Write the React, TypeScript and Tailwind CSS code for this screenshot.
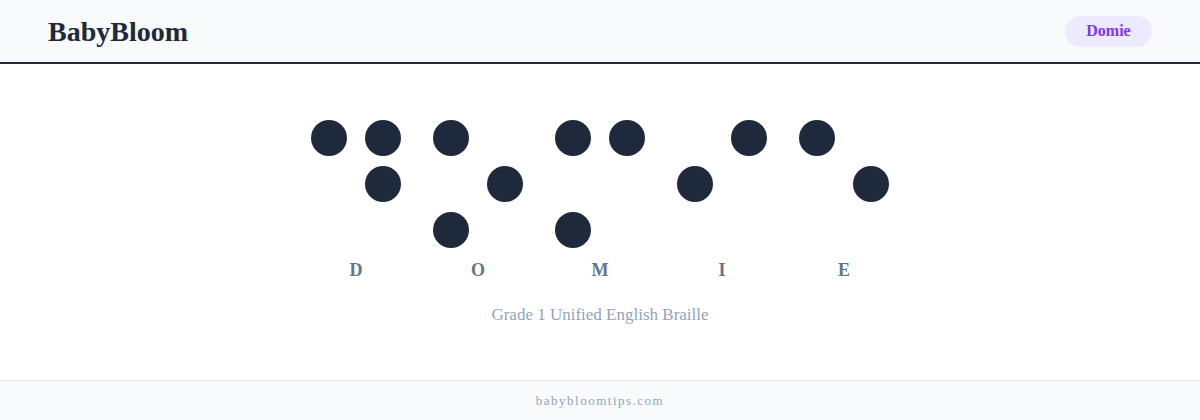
// App.tsx
const cells: { letter: string; dots: number[] }[] = [
  { letter: 'D', dots: [1, 4, 5] },
  { letter: 'O', dots: [1, 3, 5] },
  { letter: 'M', dots: [1, 3, 4] },
  { letter: 'I', dots: [2, 4] },
  { letter: 'E', dots: [1, 5] },
];

// grid order: row by row -> dot 1,4 / 2,5 / 3,6
const order = [1, 4, 2, 5, 3, 6];

function BrailleCell({ letter, dots }: { letter: string; dots: number[] }) {
  return (
    <div className="flex flex-col items-center">
      <div className="grid grid-cols-[36px_36px] gap-x-[18px] gap-y-[10px]">
        {order.map((n) => (
          <div
            key={n}
            className={
              dots.includes(n)
                ? 'h-[36px] w-[36px] rounded-full bg-[#1e293b]'
                : 'h-[36px] w-[36px] rounded-full'
            }
          />
        ))}
      </div>
      <div className="mt-[10px] text-[18px] leading-[24px] font-semibold text-[#64748b]">
        {letter}
      </div>
    </div>
  );
}

export default function App() {
  return (
    <div
      className="flex h-[420px] w-full flex-col bg-white"
      style={{ fontFamily: '"Liberation Serif", "DejaVu Serif", serif' }}
    >
      <header className="flex h-[64px] shrink-0 items-center justify-between border-b-2 border-[#1e293b] bg-[#f8fafc] px-[48px]">
        <div className="pt-[2px] text-[28px] font-bold text-[#1e293b]">BabyBloom</div>
        <div className="flex h-[31px] w-[87px] items-center justify-center rounded-full bg-[#ede9fe] text-[16px] font-semibold text-[#7c3aed]">
          Domie
        </div>
      </header>

      <main className="flex flex-1 flex-col items-center pt-[56px]">
        <div className="flex gap-[32px]">
          {cells.map((c) => (
            <BrailleCell key={c.letter} letter={c.letter} dots={c.dots} />
          ))}
        </div>
        <p className="mt-[21px] text-[17px] leading-[24px] text-[#94a3b8]">
          Grade 1 Unified English Braille
        </p>
      </main>

      <footer className="flex h-[40px] shrink-0 items-center justify-center border-t border-[#e2e8f0] bg-[#f8fafc]">
        <span className="text-[13px] tracking-[1.5px] text-[#94a3b8]">babybloomtips.com</span>
      </footer>
    </div>
  );
}
